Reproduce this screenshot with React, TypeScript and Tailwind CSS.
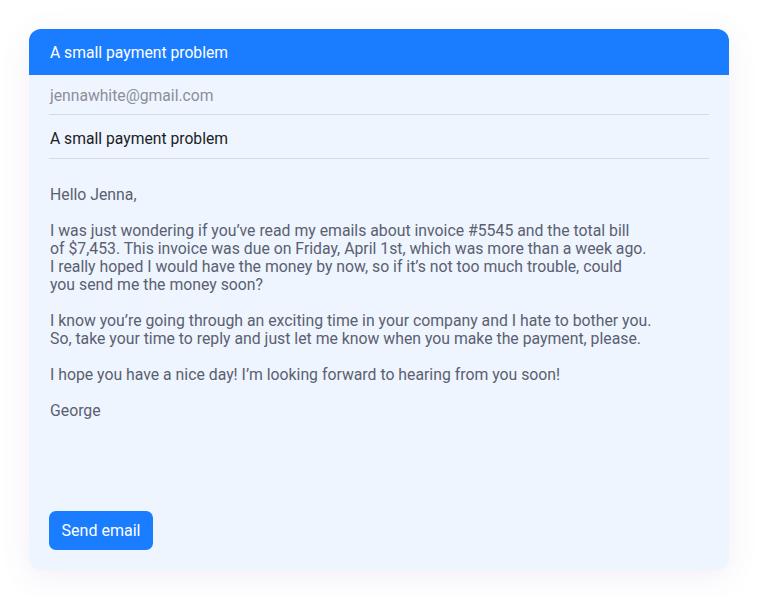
import React from "react";

export default function App() {
  return (
    <div className="w-[758px] h-[599px] bg-white" style={{ fontFamily: "Roboto, 'Liberation Sans', sans-serif" }}>
      <div className="pt-[29px] pl-[29px]">
        <div className="w-[700px] h-[541px] rounded-[12px] bg-[#eef5ff] shadow-[0_6px_30px_rgba(130,100,170,0.11)] flex flex-col overflow-hidden">
          <div className="h-[46px] bg-[#1a7cff] flex items-center pl-[21px] pt-[2px] text-white text-[15.7px]">
            A small payment problem
          </div>
          <div className="px-[20px] flex flex-col flex-1">
            <div className="h-[40px] border-b border-[#d6dae3] flex items-center pl-px pt-[3px] text-[15.7px] text-[#8b8f99]">
              jennawhite@gmail.com
            </div>
            <div className="h-[44px] border-b border-[#d6dae3] flex items-center pl-px pt-[4px] text-[15.7px] text-[#1b1d22]">
              A small payment problem
            </div>
            <div className="pl-px pt-[27px] text-[15.8px] leading-[18px] text-[#5b6070] flex flex-col gap-[18px] whitespace-nowrap">
              <p>Hello Jenna,</p>
              <p>
                I was just wondering if you’ve read my emails about invoice #5545 and the total bill
                <br />
                of $7,453. This invoice was due on Friday, April 1st, which was more than a week ago.
                <br />
                I really hoped I would have the money by now, so if it’s not too much trouble, could
                <br />
                you send me the money soon?
              </p>
              <p>
                I know you’re going through an exciting time in your company and I hate to bother you.
                <br />
                So, take your time to reply and just let me know when you make the payment, please.
              </p>
              <p>I hope you have a nice day! I’m looking forward to hearing from you soon!</p>
              <p>George</p>
            </div>
            <div className="mt-auto pb-[20px]">
              <button className="h-[39px] w-[104px] rounded-[7px] bg-[#1a7cff] text-white text-[16px] flex items-center justify-center">
                Send email
              </button>
            </div>
          </div>
        </div>
      </div>
    </div>
  );
}
